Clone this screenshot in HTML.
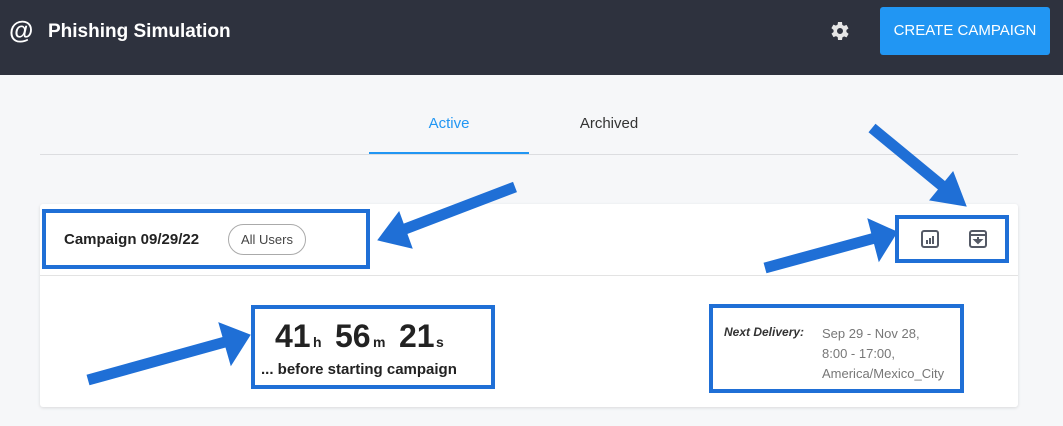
<!DOCTYPE html>
<html><head><style>
*{margin:0;padding:0;box-sizing:border-box}
body{width:1063px;height:426px;background:#f6f7f9;font-family:"Liberation Sans",sans-serif;position:relative;overflow:hidden}
.hdr{position:absolute;left:0;top:0;width:1063px;height:75px;background:#2e323e}
.a{position:absolute;white-space:nowrap}
.box{position:absolute;border:4px solid #1f6fd6}
.d{position:absolute;top:318px;font-size:32px;font-weight:bold;color:#222}
.u{position:absolute;top:334px;font-size:14px;font-weight:bold;color:#222}
</style></head><body>
<div class="hdr"></div>
<div class="a" style="left:9px;top:17px;color:#fff;font-size:25px;font-weight:bold">@</div>
<div class="a" style="left:48px;top:21px;color:#fff;font-size:19px;font-weight:bold">Phishing Simulation</div>
<svg class="a" style="left:828px;top:19px" width="24" height="24" viewBox="0 0 24 24"><path fill="#e6e6e6" fill-rule="evenodd" d="M19.4 13a7.5 7.5 0 000-2l2.1-1.6-2-3.5-2.5 1a7 7 0 00-1.7-1L15 3h-4l-.4 2.6a7 7 0 00-1.7 1l-2.5-1-2 3.5L6.6 11a7.5 7.5 0 000 2l-2.1 1.6 2 3.5 2.5-1a7 7 0 001.7 1L11 21h4l.4-2.6a7 7 0 001.7-1l2.5 1 2-3.5zM16 12a3 3 0 11-6 0 3 3 0 016 0z" transform="translate(-1 0)"/></svg>
<div class="a" style="left:880px;top:7px;width:170px;height:48px;background:#2196f3;border-radius:3px;color:#fff;font-size:15px;line-height:48px;text-align:center">CREATE CAMPAIGN</div>

<div class="a" style="left:369px;top:115px;width:160px;text-align:center;color:#2196f3;font-size:15px">Active</div>
<div class="a" style="left:529px;top:115px;width:160px;text-align:center;color:#333;font-size:15px">Archived</div>
<div class="a" style="left:40px;top:154px;width:978px;height:1px;background:#dcdde0"></div>
<div class="a" style="left:369px;top:152px;width:160px;height:2px;background:#2196f3"></div>

<div class="a" style="left:40px;top:204px;width:978px;height:203px;background:#fff;border-radius:3px;box-shadow:0 1px 3px rgba(0,0,0,.12)"></div>
<div class="a" style="left:40px;top:275px;width:978px;height:1px;background:#e3e3e3"></div>
<div class="a" style="left:64px;top:231px;font-size:15px;font-weight:bold;color:#222">Campaign 09/29/22</div>
<div class="a" style="left:228px;top:224px;width:78px;height:31px;border:1px solid #aaa;border-radius:16px;font-size:13px;color:#444;text-align:center;line-height:29px">All Users</div>

<svg class="a" style="left:920px;top:229px" width="20" height="20" viewBox="0 0 20 20"><rect x="2" y="2" width="16" height="16" rx="2" fill="none" stroke="#555a66" stroke-width="2"/><rect x="6" y="11" width="2" height="4" fill="#555a66"/><rect x="9" y="9" width="2" height="6" fill="#555a66"/><rect x="12" y="7" width="2" height="8" fill="#555a66"/></svg>
<svg class="a" style="left:968px;top:229px" width="20" height="20" viewBox="0 0 20 20"><rect x="2" y="2" width="16" height="16" rx="2" fill="none" stroke="#555a66" stroke-width="2"/><line x1="2" y1="6" x2="18" y2="6" stroke="#555a66" stroke-width="2"/><path d="M10 8v4M7 11l3 3 3-3z" stroke="#555a66" stroke-width="2" fill="#555a66"/></svg>

<div class="d" style="left:275px">41</div><div class="u" style="left:313px">h</div>
<div class="d" style="left:335px">56</div><div class="u" style="left:373px">m</div>
<div class="d" style="left:399px">21</div><div class="u" style="left:436px">s</div>
<div class="a" style="left:261px;top:361px;font-size:15px;font-weight:bold;color:#222">... before starting campaign</div>

<div class="a" style="left:724px;top:325px;font-size:12px;font-weight:bold;font-style:italic;color:#333">Next Delivery:</div>
<div class="a" style="left:822px;top:324px;font-size:13px;color:#777;line-height:20px">Sep 29 - Nov 28,<br>8:00 - 17:00,<br>America/Mexico_City</div>

<div class="box" style="left:42px;top:209px;width:328px;height:60px"></div>
<div class="box" style="left:895px;top:215px;width:114px;height:48px"></div>
<div class="box" style="left:251px;top:305px;width:244px;height:84px"></div>
<div class="box" style="left:709px;top:304px;width:255px;height:89px"></div>

<svg class="a" style="left:0;top:0" width="1063" height="426">
<g fill="#1f6fd6" stroke="#1f6fd6" stroke-linecap="butt">
<line x1="515" y1="187" x2="405" y2="229" stroke-width="11"/>
<polygon points="378,240 399,212 412,248"/>
<line x1="872" y1="128" x2="946" y2="189" stroke-width="11"/>
<polygon points="966,206 930,200 953,172"/>
<line x1="765" y1="268" x2="875" y2="238" stroke-width="11"/>
<polygon points="897,232 868,219 879,261"/>
<line x1="88" y1="380" x2="225" y2="342" stroke-width="11"/>
<polygon points="250,335 219,323 231,365"/>
</g></svg>
</body></html>
